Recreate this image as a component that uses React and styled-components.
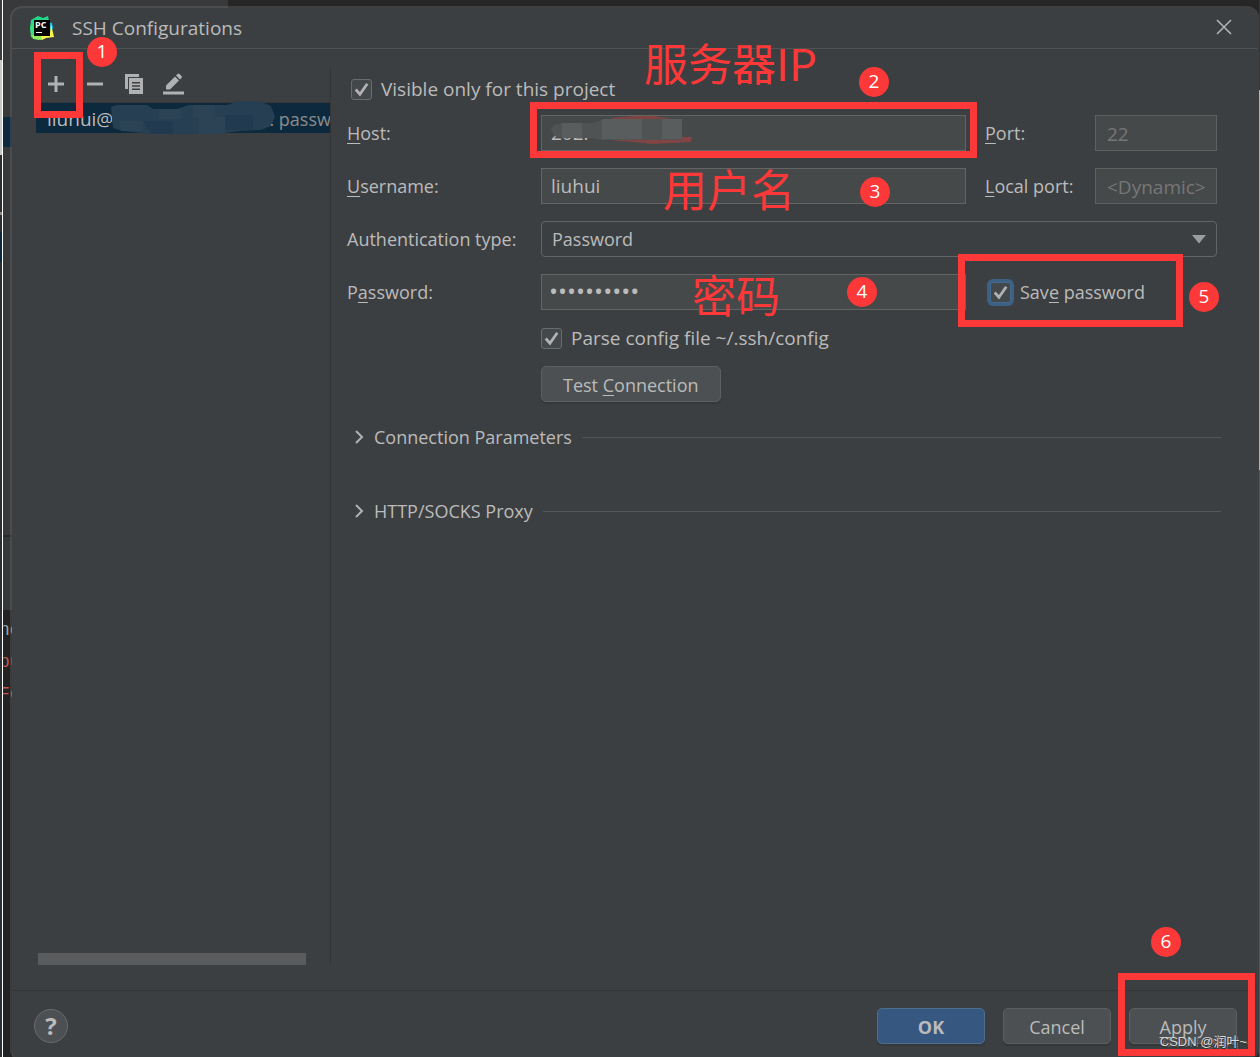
import React from "react";
import styled, { createGlobalStyle, css } from "styled-components";

const GlobalStyle = createGlobalStyle`
  * {
    box-sizing: border-box;
  }
  body {
    margin: 0;
    background: #242424;
    color: #bbbbbb;
    font-family: "Open Sans", "Noto Sans CJK SC", sans-serif;
    font-size: 18px;
    line-height: 26px;
  }
  button, input, select {
    font: inherit;
    color: inherit;
    margin: 0;
  }
  u {
    text-decoration-thickness: 1px;
    text-underline-offset: 3px;
  }
`;

const Desktop = styled.div`
  position: relative;
  min-height: 100vh;
  display: flex;
  overflow: hidden;
  background: linear-gradient(to right, #37393b 228px, #262626 228px);
`;

const OuterEdge = styled.div`
  width: 2px;
  flex: none;
  background: linear-gradient(
    #3a3c3e 60px,
    #c8c8c8 60px 155px,
    #2d2f30 155px 212px,
    #8a8a8a 212px 215px,
    #2d2f30 215px 232px,
    #0a2840 232px 262px,
    #2d2f30 262px
  );
`;

const EditorEdge = styled.div`
  width: 10px;
  flex: none;
  overflow: hidden;
  border-left: 1px solid #ffffff;
  padding-top: 617px;
  background: linear-gradient(
    #37393b 117px,
    #0d293e 117px 147px,
    #37393b 147px 535px,
    #2b2b2b 535px 537px,
    #35393a 537px 610px,
    #222222 610px
  );
`;

const CodeLine = styled.div`
  height: 32px;
  margin-left: -4px;
  font-family: "Liberation Mono", monospace;
  color: ${(props) => (props.$error ? "#c75450" : "#9aa0a3")};
`;

const RightEdge = styled.div`
  width: 1px;
  flex: none;
  background: linear-gradient(#333537 90px, #b4b4b4 90px 470px, #55585a 470px);
`;

const Dialog = styled.div`
  flex: 1;
  min-width: 0;
  margin: 6px 0 0 -2px;
  display: flex;
  flex-direction: column;
  border: 2px solid rgba(130, 130, 130, 0.28);
  border-bottom: 0;
  border-radius: 12px 12px 6px 6px;
  background: #3c3f41;
  background-clip: padding-box;
`;

const TitleBar = styled.header`
  height: 41px;
  display: flex;
  align-items: center;
  padding: 0 24px 0 17px;
  border-bottom: 1px solid #505254;
`;

const Title = styled.h1`
  flex: 1;
  margin: 0 0 0 17px;
  font-size: 19px;
  font-weight: 400;
`;

const IconButton = styled.button`
  display: flex;
  align-items: center;
  justify-content: center;
  padding: 0;
  border: 0;
  background: none;
  color: #afb1b3;
`;

const Main = styled.main`
  flex: 1;
  display: flex;
`;

const Sidebar = styled.aside`
  width: 319px;
  flex: none;
  display: flex;
  flex-direction: column;
  margin: 17px 0 25px;
  padding-left: 24px;
  border-right: 1px solid #323435;
`;

const Toolbar = styled.div`
  height: 37px;
  display: flex;
  border-bottom: 1px solid #353739;
`;

const ToolButton = styled(IconButton)`
  position: relative;
  width: 39px;
  height: 36px;
`;

const ConfigList = styled.ul`
  flex: 1;
  margin: 0;
  padding: 0;
  list-style: none;
`;

const ConfigItem = styled.li`
  height: 30px;
  display: flex;
  align-items: center;
  padding: 2px 0 0 11px;
  background: #0d293e;
  font-size: 19px;
  white-space: nowrap;
  overflow-x: clip;
`;

const AuthKind = styled.span`
  font-size: 18px;
  color: #8c8c8c;
`;

const ListSmear = styled.svg`
  flex: none;
  margin: 0 -6px 0 -4px;
`;

const ScrollThumb = styled.div`
  width: 268px;
  height: 12px;
  margin-left: 2px;
  background: #595b5d;
`;

const Form = styled.form`
  flex: 1;
  min-width: 0;
  padding: 29px 36px 0 16px;
`;

const CheckLabel = styled.label`
  position: relative;
  display: flex;
  align-items: center;
  gap: 9px;
  height: 22px;
  font-size: 19px;
  white-space: nowrap;
`;

const ProjectOnly = styled(CheckLabel)`
  margin: 0 0 15px 4px;
`;

const SavePassword = styled(CheckLabel)`
  grid-column: span 2;
  align-self: center;
  margin-left: 24px;
  font-size: 18px;
`;

const Box = styled.span`
  display: grid;
  width: 21px;
  height: 21px;

  > * {
    grid-area: 1 / 1;
  }
  svg {
    pointer-events: none;
  }
`;

const BoxInput = styled.input`
  appearance: none;
  width: 21px;
  height: 21px;
  border: 1px solid #6b6b6b;
  border-radius: 3px;
  background: #43494a;
  ${(props) =>
    props.$focused &&
    css`
      border-color: #43698e;
      box-shadow: 0 0 0 3px #3d6185;
    `}
`;

const Fields = styled.div`
  display: grid;
  grid-template-columns: 194px minmax(0, 1fr) 129px 122px;
  row-gap: 17px;
  padding-right: 4px;
`;

const Label = styled.label`
  align-self: center;
  white-space: nowrap;
`;

const SideLabel = styled(Label)`
  padding-left: 19px;
`;

const Field = styled.div`
  position: relative;
  display: flex;
  grid-column: ${(props) => (props.$wide ? "2 / -1" : "auto")};
`;

const TextInput = styled.input`
  width: 100%;
  min-width: 0;
  height: 36px;
  padding: 0 9px;
  border: 1px solid #646464;
  border-radius: 0;
  outline: 0;
  background: #45494a;
  font-size: 19px;

  &:disabled {
    padding: 2px 11px 0;
    color: #777777;
    border-color: #5e6060;
  }
  &[type="password"] {
    padding: 0 7px 4px;
    font-size: 24px;
  }
`;

const Select = styled.select`
  appearance: none;
  width: 100%;
  height: 36px;
  padding: 0 10px;
  border: 1px solid #646464;
  border-radius: 4px;
  outline: 0;
  background: #3c3f41;
`;

const SelectArrow = styled.svg`
  position: absolute;
  right: 11px;
  top: 14px;
  pointer-events: none;
`;

const HostSmear = styled.svg`
  position: absolute;
  left: 9px;
  top: 0;
  pointer-events: none;
`;

const ParseConfig = styled(CheckLabel)`
  grid-column: 2 / -1;
`;

const Button = styled.button`
  position: relative;
  height: 36px;
  min-width: 108px;
  padding: 1px 21px 0;
  border: 1px solid #5e6060;
  border-radius: 5px;
  background: #4c5052;
  box-shadow: 0 2px 1px #35383a;
  white-space: nowrap;
  ${(props) =>
    props.$primary &&
    css`
      border-color: #4c708c;
      background: #365880;
      font-weight: 700;
    `}
`;

const TestButton = styled(Button)`
  grid-column: 2;
  justify-self: start;
`;

const Sections = styled.div`
  display: flex;
  flex-direction: column;
  gap: 46px;
  margin-top: 21px;
`;

const SectionToggle = styled.button`
  display: flex;
  align-items: center;
  gap: 10px;
  height: 28px;
  padding: 0 0 0 8px;
  border: 0;
  background: none;
  white-space: nowrap;

  &::after {
    content: "";
    flex: 1;
    height: 1px;
    background: #555555;
  }
`;

const Footer = styled.footer`
  display: flex;
  align-items: center;
  gap: 18px;
  padding: 17px 20px 13px 22px;
  border-top: 1px solid #323435;
`;

const HelpButton = styled.button`
  width: 34px;
  height: 34px;
  margin-right: auto;
  padding: 0;
  border: 1px solid #696b6d;
  border-radius: 50%;
  background: #4c5052;
  font-size: 24px;
  font-weight: 700;
`;

/* Red tutorial marks drawn over the dialog */

const Frame = styled.span`
  position: absolute;
  inset: ${(props) => props.$inset};
  z-index: 1;
  border: 7px solid #fc3838;
  pointer-events: none;
`;

const Step = styled.span`
  position: absolute;
  z-index: 2;
  left: ${(props) => props.$left};
  top: ${(props) => props.$top};
  width: 30px;
  height: 30px;
  border-radius: 50%;
  background: #fc3838;
  color: #ffffff;
  font-size: 19px;
  font-weight: 400;
  line-height: 29px;
  text-align: center;
  pointer-events: none;
`;

const Remark = styled.span`
  position: absolute;
  z-index: 2;
  left: ${(props) => props.$left};
  top: ${(props) => props.$top};
  color: #fc3838;
  font-family: "Noto Sans CJK SC", sans-serif;
  font-size: 44px;
  line-height: 56px;
  white-space: nowrap;
  pointer-events: none;
`;

const Watermark = styled.span`
  position: absolute;
  z-index: 3;
  right: 13px;
  bottom: 5px;
  color: #d8d8d8;
  font-family: "Liberation Sans", "Noto Sans CJK SC", sans-serif;
  font-size: 13px;
  line-height: 20px;
  text-shadow: 1px 1px 1px #222222, 2px 1px 0 #8a8a8a;
  pointer-events: none;
`;

const Logo = () => (
  <svg width="26" height="26" viewBox="0 0 26 26" aria-hidden="true">
    <path d="M2 5 9 1l5 2 5-2 1 5-3 9-5 9-9-2-2-9z" fill="#21d789" />
    <path d="M1 12l5-6 5 12 2 6-4 1-7-3z" fill="#3be07b" />
    <path d="M19 7l4 1 1 5-2 3-5-2z" fill="#07c3f2" />
    <path d="M22 9l3 13-8 1-4 2-4-4 12-3z" fill="#fcf84a" />
    <path d="M3 20l9 1 1 4-9-1z" fill="#8fec5b" />
    <rect x="5" y="5" width="16" height="16" fill="#000000" />
    <text x="6" y="13" fill="#ffffff" fontFamily="Open Sans, sans-serif" fontSize="9" fontWeight="700">
      PC
    </text>
    <rect x="7" y="17" width="6" height="1" fill="#ffffff" />
  </svg>
);

const Check = () => (
  <svg width="21" height="21" viewBox="0 0 20 20" fill="none" aria-hidden="true">
    <path d="M4.500 10 8.500 14.500 15.500 4.500" stroke="#b2b2b2" strokeWidth="2.6" />
  </svg>
);

const CheckBox = ({ focused }) => (
  <Box>
    <BoxInput type="checkbox" defaultChecked $focused={focused} />
    <Check />
  </Box>
);

const Chevron = () => (
  <svg width="9" height="14" viewBox="0 0 9 14" fill="none" aria-hidden="true">
    <path d="M1 1 7 7l-6 6" stroke="#afb1b3" strokeWidth="2" />
  </svg>
);

const App = () => {
  return (
    <>
      <GlobalStyle />
      <Desktop>
        <OuterEdge />
        <EditorEdge>
          <CodeLine>nc</CodeLine>
          <CodeLine $error>pu</CodeLine>
          <CodeLine $error>Fc</CodeLine>
        </EditorEdge>
        <Dialog>
          <TitleBar>
            <Logo />
            <Title>SSH Configurations</Title>
            <IconButton aria-label="Close">
              <svg width="18" height="18" viewBox="0 0 18 18" fill="none">
                <path d="M2 1l14 14M16 1 2 15" stroke="#b4b6b8" strokeWidth="1.5" />
              </svg>
            </IconButton>
          </TitleBar>
          <Main>
            <Sidebar>
              <Toolbar>
                <ToolButton aria-label="Add">
                  <svg width="16" height="16" viewBox="0 0 16 16">
                    <path d="M6.5 0h3v6.5H16v3H9.5V16h-3V9.5H0v-3h6.5z" fill="currentColor" />
                  </svg>
                  <Frame $inset="-14px -8px -16px -2px" />
                  <Step $left="51px" $top="-29px">1</Step>
                </ToolButton>
                <ToolButton aria-label="Remove">
                  <svg width="16" height="16" viewBox="0 0 16 16">
                    <path d="M0 6.5h16v3H0z" fill="currentColor" />
                  </svg>
                </ToolButton>
                <ToolButton aria-label="Copy">
                  <svg width="20" height="20" viewBox="0 0 20 20">
                    <path d="M1 0h14v3H4v12H1z" fill="currentColor" />
                    <path
                      d="M5 4h14v16H5zM8 8v1.5h8V8zm0 3.2v1.5h8v-1.5zm0 3.3V16h8v-1.5z"
                      fill="currentColor"
                      fillRule="evenodd"
                    />
                  </svg>
                </ToolButton>
                <ToolButton aria-label="Edit">
                  <svg width="22" height="22" viewBox="0 0 22 22">
                    <path d="M4 16.5V12.5L13 3.5l4 4-9 9z" fill="currentColor" />
                    <path d="M14 2.5l1.5-1.5q1-.8 2 0l2 2q.8 1 0 2L18 6.5z" fill="currentColor" />
                    <path d="M1 18.5h21v3H1z" fill="currentColor" />
                  </svg>
                </ToolButton>
              </Toolbar>
              <ConfigList>
                <ConfigItem>
                  <span>liuhui@</span>
                  <ListSmear width="166" height="36" viewBox="0 0 166 36" aria-hidden="true">
                    <path
                      d="M2 6 8 4h30l6 4h24l12-4h38l12-4h20l12 5 4 11-4 9-10 4-22 1-20 3H42L14 30 4 27z"
                      fill="#263f52"
                    />
                    <path d="M10 20h24v10H12zM50 8h22v10H50zM84 4h22v12H84zM90 16h26v17H90z" fill="#2b4355" />
                    <path d="M34 20h30v13H42zM116 14h28v15h-28z" fill="#213a50" />
                  </ListSmear>
                  <AuthKind>. password</AuthKind>
                </ConfigItem>
              </ConfigList>
              <ScrollThumb />
            </Sidebar>
            <Form onSubmit={(e) => e.preventDefault()}>
              <ProjectOnly>
                <CheckBox />
                Visible only for this project
              </ProjectOnly>
              <Fields>
                <Label htmlFor="host">
                  <u>H</u>ost:
                </Label>
                <Field>
                  <TextInput id="host" defaultValue="202." />
                  <HostSmear width="144" height="30" viewBox="0 0 144 30" aria-hidden="true">
                    <path d="M62 3 84 1h20l18 3v4H62z" fill="#7f4342" />
                    <path d="M40 22h102l-1 5-38 2-20-2-36-3z" fill="#844444" />
                    <path d="M1 14 4 10l8-2h32l10-4h78v21H52l-8-2H12l-8-2z" fill="#505354" />
                    <path d="M12 8h20v15H12zM52 4h40v20H52zM112 4h20v20h-20z" fill="#5a5d5e" />
                  </HostSmear>
                  <Frame $inset="-13px -11px -7px" />
                  <Remark $left="103px" $top="-81px">服务器IP</Remark>
                  <Step $left="318px" $top="-48px">2</Step>
                </Field>
                <SideLabel htmlFor="port">
                  <u>P</u>ort:
                </SideLabel>
                <Field>
                  <TextInput id="port" defaultValue="22" disabled />
                </Field>

                <Label htmlFor="username">
                  <u>U</u>sername:
                </Label>
                <Field>
                  <TextInput id="username" defaultValue="liuhui" />
                  <Remark $left="122px" $top="-8px">用户名</Remark>
                  <Step $left="319px" $top="9px">3</Step>
                </Field>
                <SideLabel htmlFor="local-port">
                  <u>L</u>ocal port:
                </SideLabel>
                <Field>
                  <TextInput id="local-port" defaultValue="<Dynamic>" disabled />
                </Field>

                <Label htmlFor="auth">Authentication type:</Label>
                <Field $wide>
                  <Select id="auth">
                    <option>Password</option>
                  </Select>
                  <SelectArrow width="14" height="9" viewBox="0 0 14 9" aria-hidden="true">
                    <path d="M0 0h14L7 8.5z" fill="#9a9c9e" />
                  </SelectArrow>
                </Field>

                <Label htmlFor="password">
                  P<u>a</u>ssword:
                </Label>
                <Field>
                  <TextInput id="password" type="password" defaultValue="0123456789" />
                  <Remark $left="151px" $top="-8px">密码</Remark>
                  <Step $left="306px" $top="3px">4</Step>
                </Field>
                <SavePassword>
                  <CheckBox focused />
                  <span>
                    Sav<u>e</u> password
                  </span>
                  <Frame $inset="-27px 34px -24px -32px" />
                  <Step $left="199px" $top="1px">5</Step>
                </SavePassword>

                <ParseConfig>
                  <CheckBox />
                  Parse config file ~/.ssh/config
                </ParseConfig>
                <TestButton type="button">
                  Test <u>C</u>onnection
                </TestButton>
              </Fields>
              <Sections>
                <SectionToggle type="button">
                  <Chevron />
                  Connection Parameters
                </SectionToggle>
                <SectionToggle type="button">
                  <Chevron />
                  HTTP/SOCKS Proxy
                </SectionToggle>
              </Sections>
            </Form>
          </Main>
          <Footer>
            <HelpButton aria-label="Help">?</HelpButton>
            <Button $primary>OK</Button>
            <Button>Cancel</Button>
            <Button>
              <u>A</u>pply
              <Frame $inset="-36px -19px -13px -12px" />
              <Step $left="21px" $top="-82px">6</Step>
            </Button>
          </Footer>
        </Dialog>
        <RightEdge />
        <Watermark>CSDN @润叶~</Watermark>
      </Desktop>
    </>
  );
};

export default App;
